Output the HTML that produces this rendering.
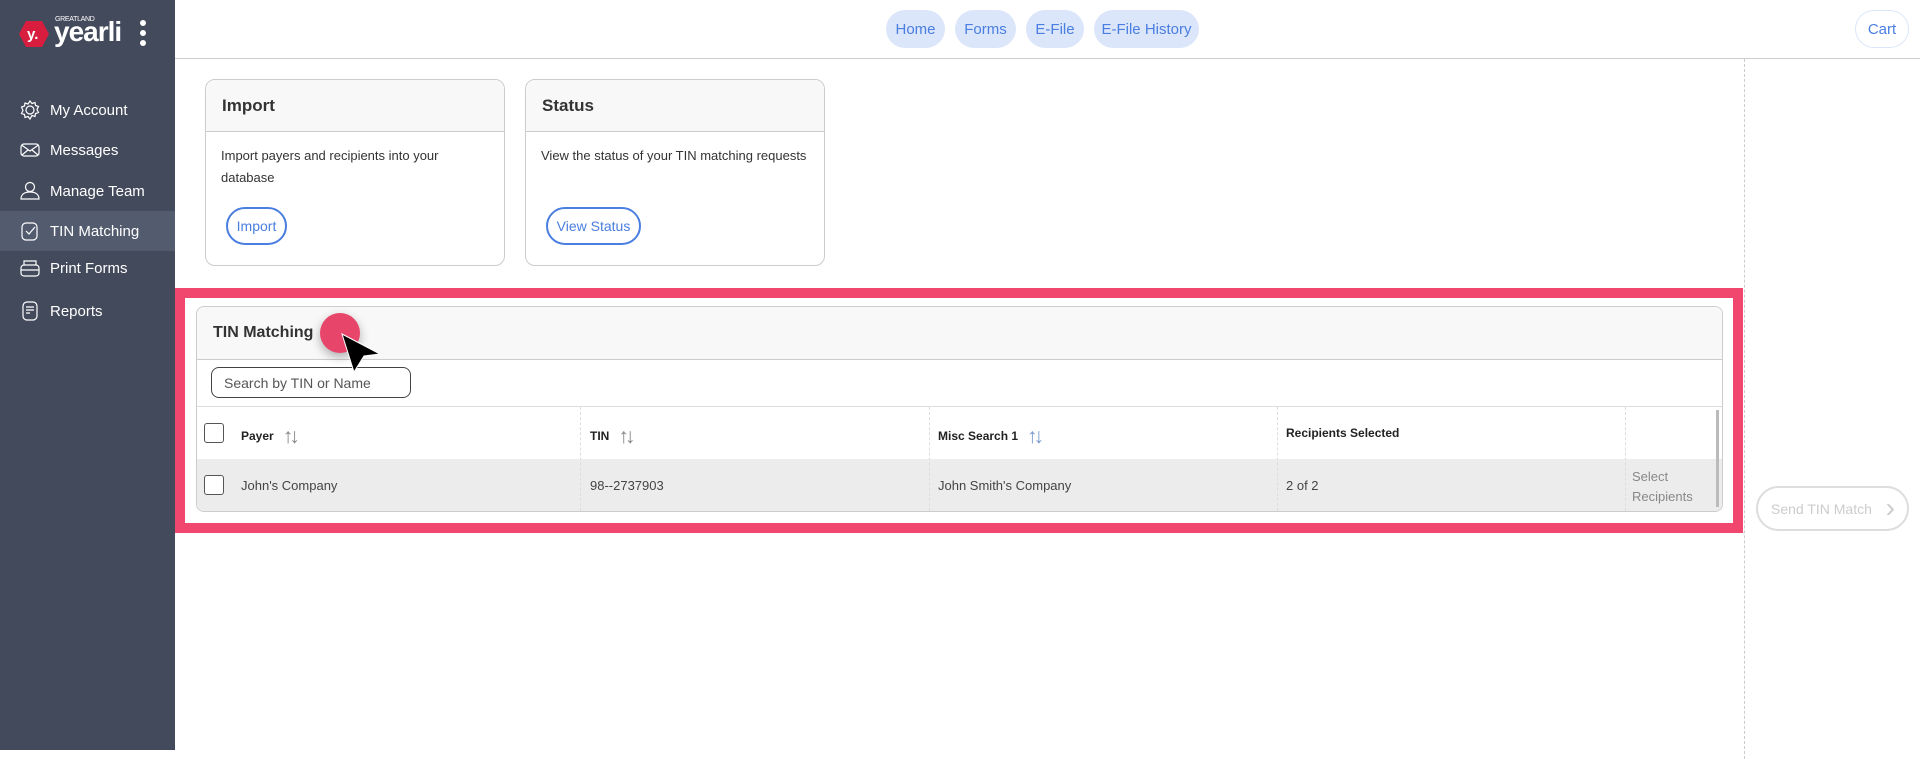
<!DOCTYPE html>
<html><head><meta charset="utf-8"><style>
*{box-sizing:border-box;margin:0;padding:0}
body{width:1920px;height:750px;overflow:hidden;background:#fff;font-family:"Liberation Sans",Arial,sans-serif;position:relative;color:#333}
.abs{position:absolute}
#side{left:0;top:0;width:175px;height:750px;background:#434a5b}
.item{position:absolute;left:0;width:175px;height:40px;color:#fff;font-size:15px;display:flex;align-items:center;padding-left:50px}
.item svg{position:absolute;left:20px;top:10px}
.item.act{background:#535b6e}
.nav{position:absolute;top:10px;height:38px;border-radius:19px;background:#dbe6fb;color:#4a7ee0;font-size:15px;display:flex;align-items:center;justify-content:center}
.card{position:absolute;border:1px solid #ccc;border-radius:10px;background:#fff;overflow:hidden}
.card .hd{height:52px;background:#f8f8f8;border-bottom:1px solid #ccc;font-weight:bold;font-size:17px;padding:16px 0 0 16px;color:#333}
.btn{position:absolute;border:2px solid #4a7ee0;border-radius:19px;color:#4a7ee0;font-size:14px;display:flex;align-items:center;justify-content:center;background:#fff}
.cb{position:absolute;width:20px;height:20px;border:1.5px solid #555;border-radius:3px;background:#fff}
.th{position:absolute;font-size:12px;font-weight:bold;color:#222}
.td{position:absolute;font-size:13px;color:#444}
.vl{position:absolute;width:0;border-left:1px dashed #ddd}
.sort{color:#888;font-size:21px;font-weight:normal;margin-left:9px;letter-spacing:-4px;vertical-align:-3px}
</style></head><body>
<div id="side" class="abs">
 <svg class="abs" style="left:18px;top:20px" width="32" height="28" viewBox="0 0 32 28"><polygon points="8,1 24,1 31,14 24,27 8,27 1,14" fill="#d81d3f"/><text x="9" y="19" fill="#fff" font-size="15" font-weight="bold" font-family="Liberation Sans">y.</text></svg>
 <div class="abs" style="left:55px;top:16px;color:#fff;font-size:7px;letter-spacing:-0.3px">GREATLAND</div>
 <div class="abs" style="left:54px;top:16px;color:#fff;font-size:28px;font-weight:bold;letter-spacing:-1px">yearli</div>
 <div class="abs" style="left:140px;top:20px;width:6px;height:6px;border-radius:3px;background:#fff"></div>
 <div class="abs" style="left:140px;top:30px;width:6px;height:6px;border-radius:3px;background:#fff"></div>
 <div class="abs" style="left:140px;top:40px;width:6px;height:6px;border-radius:3px;background:#fff"></div>
 <div class="item" style="top:90px"><svg width="20" height="20" viewBox="0 0 20 20" fill="none" stroke="#fff" stroke-width="1.2"><circle cx="10" cy="10" r="4"/><path d="M10 1l2 2.5 3-1 .5 3 3 1-1.5 3 1.5 3-3 1-.5 3-3-1L10 19l-2-2.5-3 1-.5-3-3-1 1.5-3L1.5 7l3-1 .5-3 3 1z"/></svg>My Account</div>
 <div class="item" style="top:130px"><svg width="20" height="20" viewBox="0 0 20 20" fill="none" stroke="#fff" stroke-width="1.2"><rect x="1" y="4" width="18" height="12" rx="3"/><path d="M1.5 5l8.5 6 8.5-6M2 15l6-5M18 15l-6-5"/></svg>Messages</div>
 <div class="item" style="top:171px"><svg width="20" height="20" viewBox="0 0 20 20" fill="none" stroke="#fff" stroke-width="1.2"><circle cx="10" cy="6" r="4.5"/><path d="M1 18c0-5 4-7 9-7s9 2 9 7z"/></svg>Manage Team</div>
 <div class="item act" style="top:211px"><svg width="20" height="20" viewBox="0 0 20 20" fill="none" stroke="#fff" stroke-width="1.2"><rect x="2" y="2" width="15" height="17" rx="4"/><path d="M6 10l3 3 6-7"/></svg>TIN Matching</div>
 <div class="item" style="top:248px"><svg width="20" height="20" viewBox="0 0 20 20" fill="none" stroke="#fff" stroke-width="1.2"><rect x="1" y="7" width="18" height="11" rx="3"/><path d="M4 7V3h12v4M1 12h18"/></svg>Print Forms</div>
 <div class="item" style="top:291px"><svg width="20" height="20" viewBox="0 0 20 20" fill="none" stroke="#fff" stroke-width="1.2"><rect x="3" y="1" width="14" height="18" rx="4"/><path d="M6 6h8M6 9h8M6 12h4"/></svg>Reports</div>
</div>
<div class="abs" style="left:175px;top:58px;width:1745px;border-top:1.5px solid #ccc"></div>
<div class="nav" style="left:886px;width:59px">Home</div>
<div class="nav" style="left:955px;width:61px">Forms</div>
<div class="nav" style="left:1026px;width:58px">E-File</div>
<div class="nav" style="left:1094px;width:105px">E-File History</div>
<div class="nav" style="left:1855px;width:54px;background:#fff;border:1.5px solid #dbe6fb">Cart</div>
<div class="abs" style="left:1744px;top:59px;height:700px;border-left:1px dashed #ccc"></div>

<div class="card" style="left:205px;top:79px;width:300px;height:187px"><div class="hd">Import</div>
 <div style="font-size:13px;line-height:22px;padding:13px 0 0 15px;color:#333">Import payers and recipients into your<br>database</div></div>
<div class="btn" style="left:226px;top:207px;width:61px;height:38px">Import</div>
<div class="card" style="left:525px;top:79px;width:300px;height:187px"><div class="hd">Status</div>
 <div style="font-size:13px;line-height:22px;padding:13px 0 0 15px;color:#333">View the status of your TIN matching requests</div></div>
<div class="btn" style="left:546px;top:207px;width:95px;height:38px">View Status</div>

<div class="abs" style="left:175px;top:288px;width:1568px;height:245px;border:10px solid #f1466e"></div>
<div class="card" style="left:196px;top:306px;width:1527px;height:206px;border-radius:8px">
 <div class="hd" style="height:53px;padding:17px 0 0 16px;font-size:16px">TIN Matching</div></div>
<div class="abs" style="left:211px;top:367px;width:200px;height:31px;border:1.3px solid #444;border-radius:8px;font-size:14px;color:#555;padding:7px 0 0 12px">Search by TIN or Name</div>
<div class="abs" style="left:197px;top:406px;width:1525px;border-top:1px solid #ddd"></div>
<div class="abs" style="left:197px;top:459px;width:1525px;height:52px;background:#ececec;border-radius:0 0 7px 7px"></div>
<div class="vl" style="left:580px;top:407px;height:104px"></div>
<div class="vl" style="left:929px;top:407px;height:104px"></div>
<div class="vl" style="left:1277px;top:407px;height:104px"></div>
<div class="vl" style="left:1625px;top:407px;height:104px"></div>
<div class="abs" style="left:1716px;top:410px;width:3px;height:97px;background:#bbb"></div>
<div class="cb" style="left:204px;top:423px"></div>
<div class="cb" style="left:204px;top:475px"></div>
<div class="th" style="left:241px;top:425px">Payer<span class="sort">↑↓</span></div>
<div class="th" style="left:590px;top:425px">TIN<span class="sort">↑↓</span></div>
<div class="th" style="left:938px;top:425px">Misc Search 1<span class="sort" style="color:#7a9acc">↑↓</span></div>
<div class="th" style="left:1286px;top:426px">Recipients Selected</div>
<div class="td" style="left:241px;top:478px">John's Company</div>
<div class="td" style="left:590px;top:478px">98--2737903</div>
<div class="td" style="left:938px;top:478px">John Smith's Company</div>
<div class="td" style="left:1286px;top:478px">2 of 2</div>
<div class="td" style="left:1632px;top:467px;color:#888;line-height:20px">Select<br>Recipients</div>

<div class="abs" style="left:1756px;top:486px;width:153px;height:45px;border:2px solid #ddd;border-radius:23px;color:#ccc;font-size:14px;padding:13px 0 0 13px">Send TIN Match<span style="position:absolute;right:12px;top:4px;font-size:28px;color:#ccc">›</span></div>

<div class="abs" style="left:320px;top:313px;width:40px;height:40px;border-radius:20px;background:#e8456b;box-shadow:0 4px 10px rgba(0,0,0,.3)"></div>
<svg class="abs" style="left:340px;top:332px" width="44" height="44" viewBox="0 0 44 44"><path d="M2 2 L40 22 L24 24 L14 40 Z" fill="#000" stroke="#fff" stroke-width="1"/></svg>
</body></html>
